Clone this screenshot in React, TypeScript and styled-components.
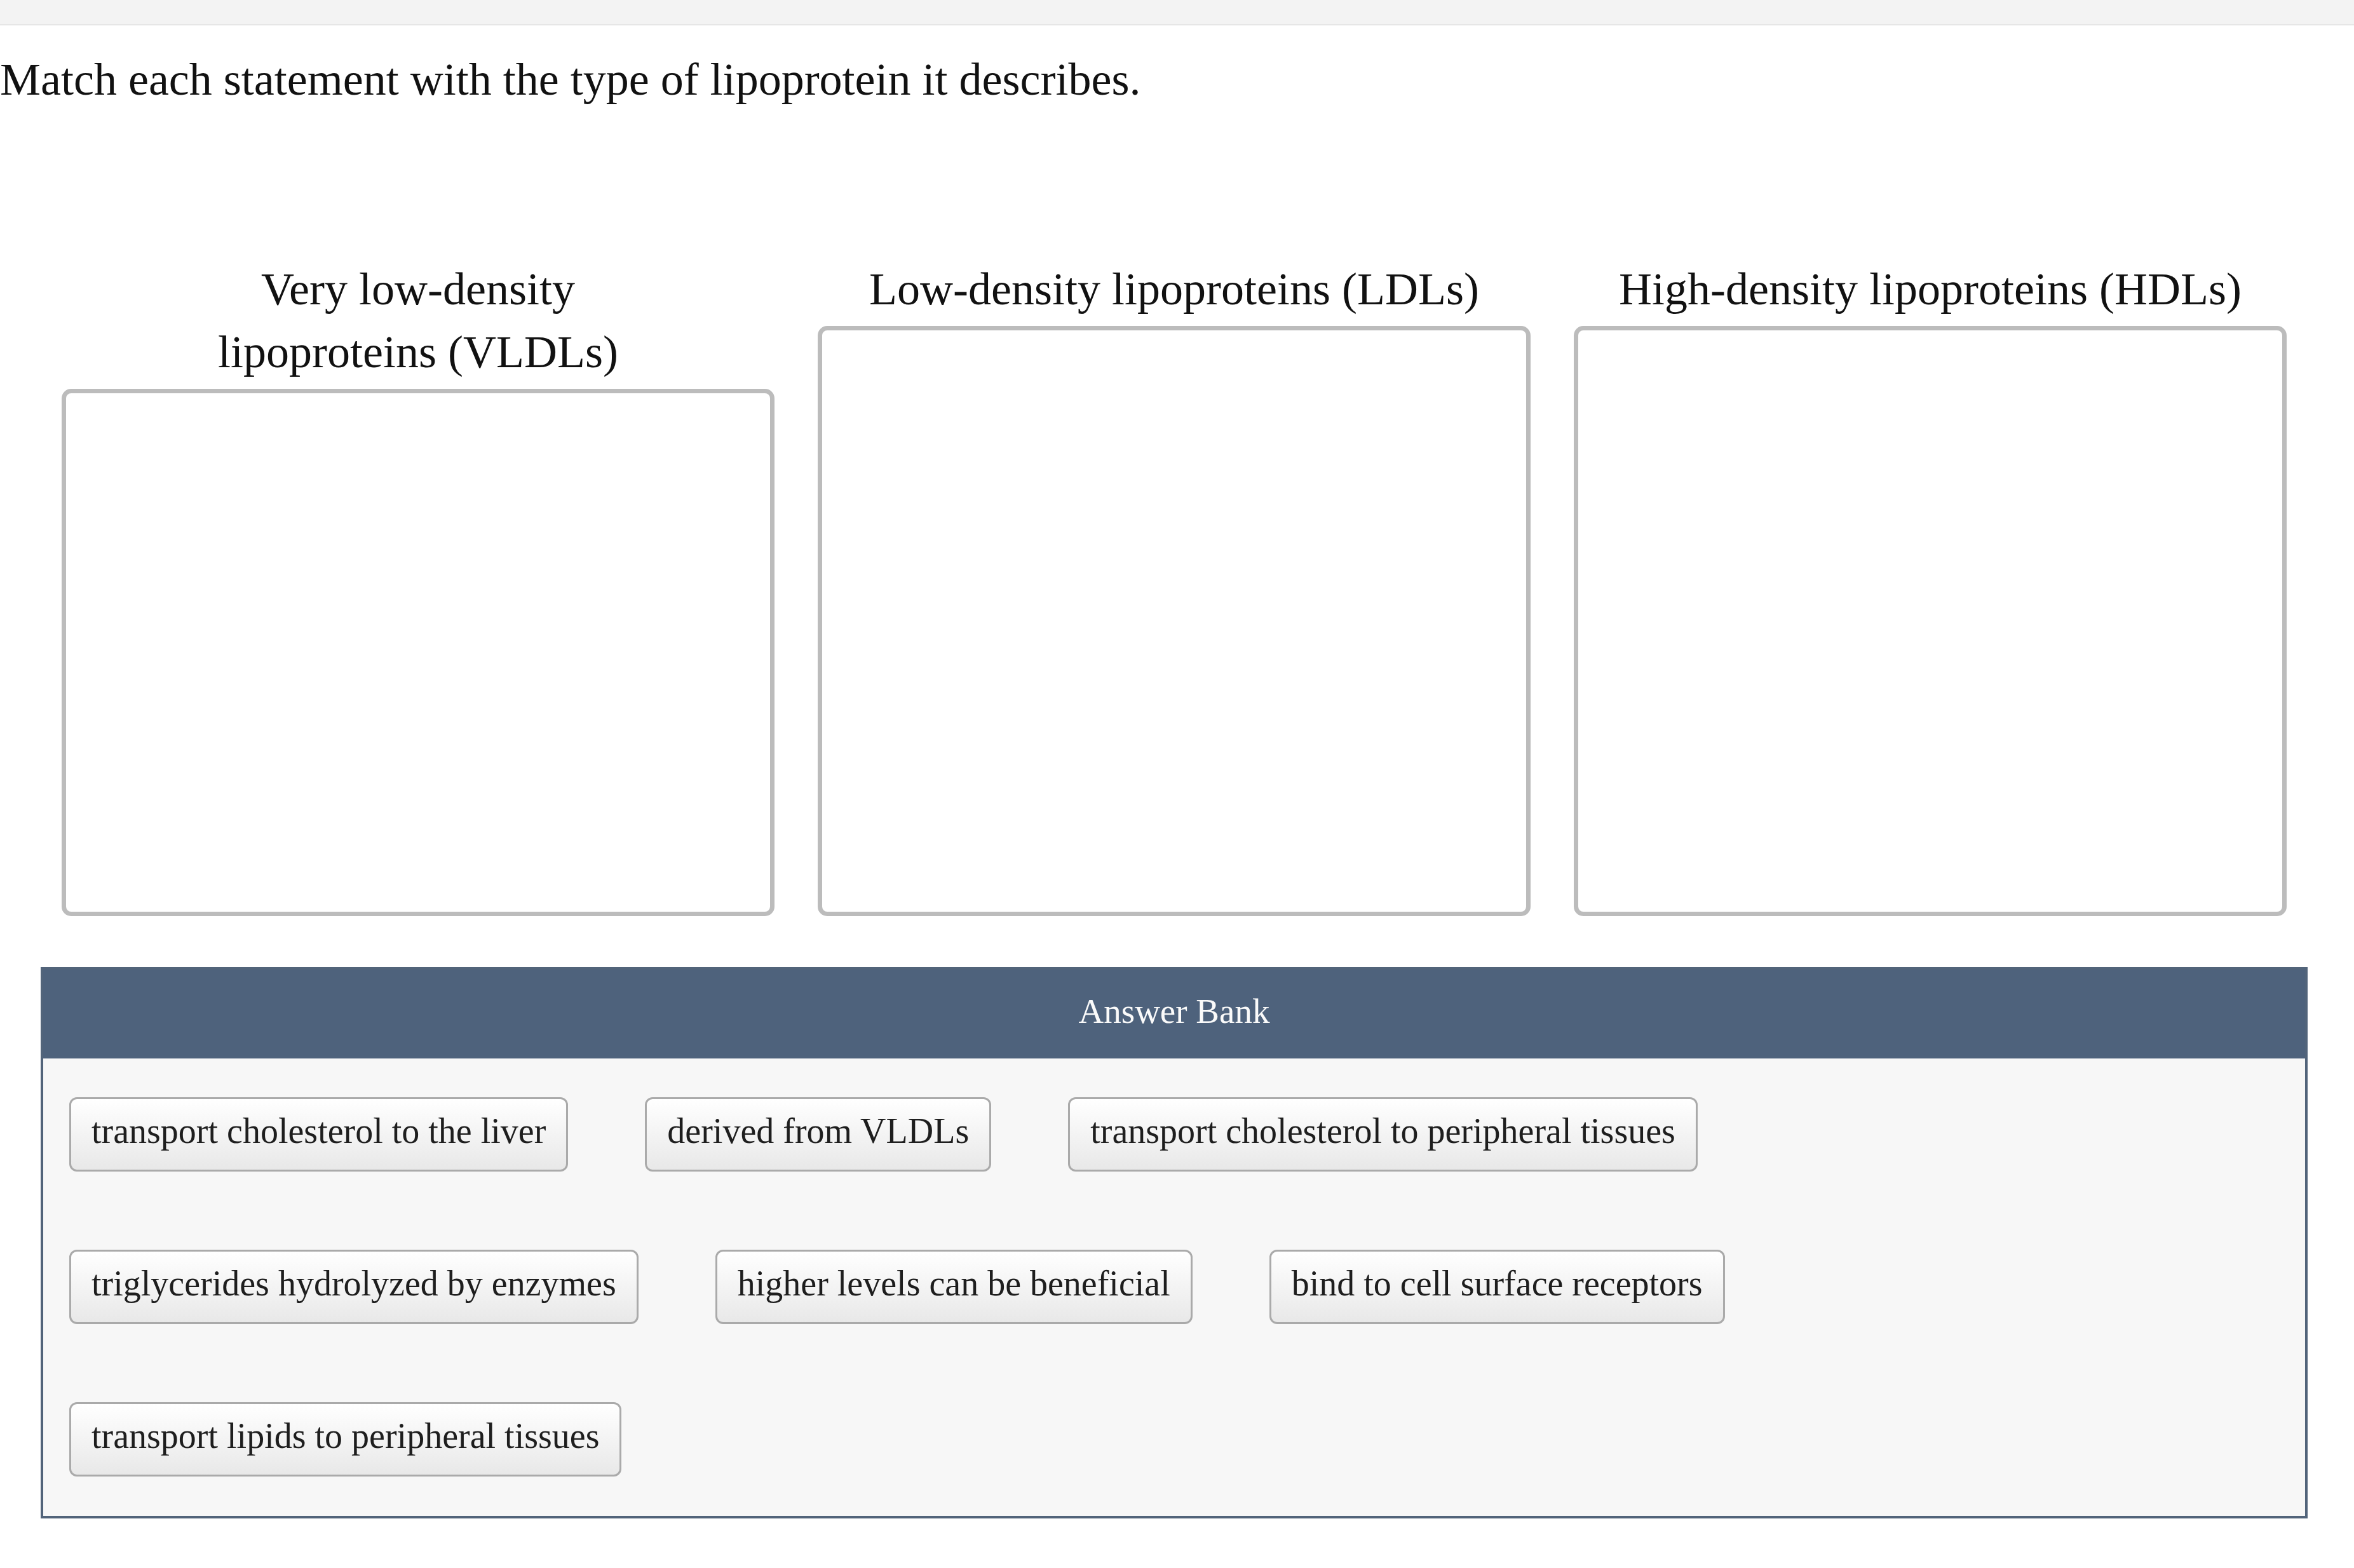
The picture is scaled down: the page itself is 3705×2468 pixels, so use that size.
import React from 'react'
import styled, { createGlobalStyle } from 'styled-components'

const GlobalStyle = createGlobalStyle`
  html, body {
    margin: 0;
    padding: 0;
    background: #ffffff;
  }
  body {
    font-family: "Liberation Serif", "Times New Roman", serif;
    color: #111111;
  }
`

const TopBar = styled.div`
  height: 38px;
  background: #f3f3f3;
  border-bottom: 2px solid #e6e6e6;
`

const Prompt = styled.p`
  margin: 36px 0 0 0;
  font-size: 72px;
  line-height: 99px;
`

const Targets = styled.div`
  display: grid;
  grid-template-columns: repeat(3, 1122px);
  column-gap: 68px;
  height: 1036px;
  margin-top: 231px;
  padding-left: 97px;
`

const Column = styled.div`
  display: flex;
  flex-direction: column;
  min-height: 0;
`

const Heading = styled.div`
  text-align: center;
  font-size: 72px;
  line-height: 99px;
  margin-bottom: 8px;
`

const DropBox = styled.div`
  flex: 1;
  border: 7px solid #bcbcbc;
  border-radius: 15px;
  background: #ffffff;
`

const Bank = styled.section`
  width: 3568px;
  margin: 80px 0 0 64px;
  box-sizing: border-box;
  border: 4px solid #52647a;
  background: #f7f7f7;
`

const BankHeader = styled.div`
  height: 140px;
  background: #4e627c;
  color: #fafafa;
  font-size: 55px;
  line-height: 131px;
  text-align: center;
`

const ChipArea = styled.div`
  display: flex;
  flex-wrap: wrap;
  gap: 123px 121px;
  padding: 61px 41px 62px 41px;
`

const Chip = styled.div`
  display: inline-flex;
  align-items: center;
  box-sizing: border-box;
  height: 117px;
  padding: 0 32px 12px 32px;
  border: 3px solid #aaaaaa;
  border-radius: 12px;
  background: linear-gradient(#ffffff, #e8e8e8);
  color: #1e1e1e;
  font-size: 56px;
  white-space: nowrap;
`

const columns: string[][] = [
  ['Very low-density', 'lipoproteins (VLDLs)'],
  ['Low-density lipoproteins (LDLs)'],
  ['High-density lipoproteins (HDLs)'],
]

const answers: string[] = [
  'transport cholesterol to the liver',
  'derived from VLDLs',
  'transport cholesterol to peripheral tissues',
  'triglycerides hydrolyzed by enzymes',
  'higher levels can be beneficial',
  'bind to cell surface receptors',
  'transport lipids to peripheral tissues',
]

function App() {
  return (
    <>
      <GlobalStyle />
      <TopBar />
      <Prompt>Match each statement with the type of lipoprotein it describes.</Prompt>
      <Targets>
        {columns.map((lines, i) => (
          <Column key={i}>
            <Heading>
              {lines.map(line => (
                <div key={line}>{line}</div>
              ))}
            </Heading>
            <DropBox />
          </Column>
        ))}
      </Targets>
      <Bank>
        <BankHeader>Answer Bank</BankHeader>
        <ChipArea>
          {answers.map(text => (
            <Chip key={text}>{text}</Chip>
          ))}
        </ChipArea>
      </Bank>
    </>
  )
}

export default App
